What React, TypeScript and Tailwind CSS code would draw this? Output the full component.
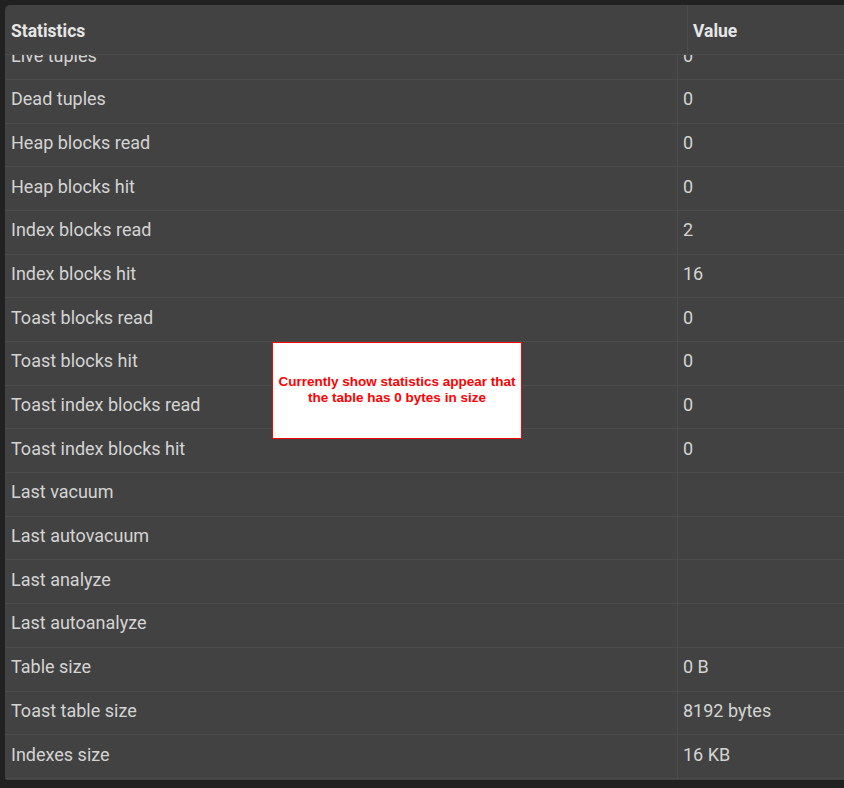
const rows: [string, string][] = [
  ["Live tuples", "0"],
  ["Dead tuples", "0"],
  ["Heap blocks read", "0"],
  ["Heap blocks hit", "0"],
  ["Index blocks read", "2"],
  ["Index blocks hit", "16"],
  ["Toast blocks read", "0"],
  ["Toast blocks hit", "0"],
  ["Toast index blocks read", "0"],
  ["Toast index blocks hit", "0"],
  ["Last vacuum", ""],
  ["Last autovacuum", ""],
  ["Last analyze", ""],
  ["Last autoanalyze", ""],
  ["Table size", "0 B"],
  ["Toast table size", "8192 bytes"],
  ["Indexes size", "16 KB"],
];

export default function App() {
  return (
    <div className="relative w-[844px] h-[788px] bg-[#212121] pt-[5px] pl-[5px] overflow-hidden font-['Roboto',sans-serif]">
      <div className="w-[845px] h-[775px] bg-[#424242] rounded-tl-[5px] rounded-bl-[3px] flex flex-col overflow-hidden">
        <div className="flex h-[50px] shrink-0 border-b border-[#4c4c4c] text-[#e6e6e6] font-bold text-[17.5px] pt-[3px]">
          <div className="w-[682px] pl-[6px] flex items-center">Statistics</div>
          <div className="flex-1 border-l border-[#4c4c4c] mt-[-3px] pt-[3px] pl-[5px] flex items-center">Value</div>
        </div>
        <div className="flex-1 overflow-hidden">
          <div className="mt-[-18.8px]">
            {rows.map(([k, v]) => (
              <div key={k} className="flex h-[43.7px] border-b border-[#4c4c4c] text-[#d4d4d4] text-[18px]">
                <div className="w-[672px] pl-[6px] pb-[5px] flex items-center">{k}</div>
                <div className="flex-1 border-l border-[#4c4c4c] pl-[5px] pb-[5px] flex items-center">{v}</div>
              </div>
            ))}
          </div>
        </div>
      </div>
      <div className="absolute left-[272px] top-[342px] w-[250px] h-[97px] bg-white border border-[#ff0000] flex items-center justify-center text-center">
        <p className="text-[#ff0000] font-bold text-[13.5px] leading-[16px] font-['Liberation_Sans',Arial,sans-serif] mt-[-2px]">
          Currently show statistics appear that
          <br />
          the table has 0 bytes in size
        </p>
      </div>
    </div>
  );
}
